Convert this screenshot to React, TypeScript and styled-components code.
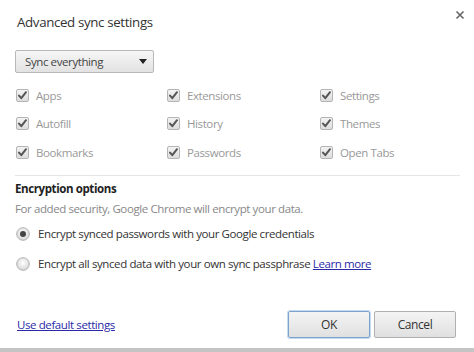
import styled, { createGlobalStyle } from 'styled-components';

const GlobalStyle = createGlobalStyle`
    html, body {
        margin: 0;
        padding: 0;
        background: #fff;
    }
    body {
        font-family: "Open Sans", "Noto Sans", sans-serif;
        color: #333;
        letter-spacing: -0.4px;
    }
`;

const syncItems = [
    ['Apps', 'Extensions', 'Settings'],
    ['Autofill', 'History', 'Themes'],
    ['Bookmarks', 'Passwords', 'Open Tabs'],
];

const CheckBox = () => (
    <svg width="13" height="13" viewBox="0 0 13 13">
        <defs>
            <linearGradient id="cbFill" x1="0" y1="0" x2="0" y2="1">
                <stop offset="0" stopColor="#f4f4f4" />
                <stop offset="1" stopColor="#dcdcdc" />
            </linearGradient>
        </defs>
        <rect x="0.5" y="0.5" width="12" height="12" rx="1.5" fill="url(#cbFill)" stroke="#b5b5b5" />
        <path d="M3 6.6 L5.3 9.2 L10 3.2" fill="none" stroke="#555" strokeWidth="2" strokeLinecap="round" strokeLinejoin="round" />
    </svg>
);

const Radio = ({ checked }: { checked?: boolean }) => (
    <svg width="14" height="14" viewBox="0 0 14 14">
        <defs>
            <radialGradient id="rdFill" cx="0.5" cy="0.4" r="0.6">
                <stop offset="0" stopColor="#ffffff" />
                <stop offset="1" stopColor="#d6d6d6" />
            </radialGradient>
        </defs>
        <circle cx="7" cy="7" r="6.3" fill="url(#rdFill)" stroke="#b0b0b0" />
        {checked && <circle cx="7" cy="7" r="3" fill="#444" />}
    </svg>
);

const App = () => {
    return (
        <>
            <GlobalStyle />
            <Dialog>
                <Header>
                    <Title>Advanced sync settings</Title>
                    <CloseButton>
                        <svg width="10" height="10" viewBox="0 0 10 10">
                            <path d="M1.5 1.5 L8.5 8.5 M8.5 1.5 L1.5 8.5" stroke="#666" strokeWidth="1.6" />
                        </svg>
                    </CloseButton>
                </Header>

                <Select>
                    <span>Sync everything</span>
                    <Arrow />
                </Select>

                <CheckGrid>
                    {syncItems.flat().map(label => (
                        <CheckItem key={label}>
                            <CheckBox />
                            <span>{label}</span>
                        </CheckItem>
                    ))}
                </CheckGrid>

                <Separator />

                <Section>
                    <SectionTitle>Encryption options</SectionTitle>
                    <Description>For added security, Google Chrome will encrypt your data.</Description>
                    <RadioRow>
                        <Radio checked />
                        <span>Encrypt synced passwords with your Google credentials</span>
                    </RadioRow>
                    <RadioRow>
                        <Radio />
                        <span>
                            Encrypt all synced data with your own sync passphrase <Link>Learn more</Link>
                        </span>
                    </RadioRow>
                </Section>

                <Footer>
                    <Link>Use default settings</Link>
                    <Buttons>
                        <Button $focused>OK</Button>
                        <Button>Cancel</Button>
                    </Buttons>
                </Footer>
            </Dialog>
            <BottomEdge />
        </>
    );
};

export default App;

const Dialog = styled.div`
    width: 474px;
    height: 348px;
    box-sizing: border-box;
    padding: 0 18px 0 15px;
    display: flex;
    flex-direction: column;
    font-size: 11.5px;
`;

const Header = styled.div`
    display: flex;
    justify-content: space-between;
    align-items: center;
    height: 43px;
    padding-left: 2px;
`;

const Title = styled.div`
    font-size: 13.3px;
    letter-spacing: -0.35px;
    color: #333;
`;

const CloseButton = styled.div`
    display: flex;
    align-items: center;
    margin-top: -14px;
    margin-right: -9px;
`;

const Select = styled.div`
    margin-top: 7px;
    width: 139px;
    height: 23px;
    box-sizing: border-box;
    border: 1px solid #b8b8b8;
    border-radius: 2px;
    background: linear-gradient(#f6f6f6, #e2e2e2);
    display: flex;
    align-items: center;
    justify-content: space-between;
    padding: 0 6px 0 9px;
    color: #444;
`;

const Arrow = styled.div`
    width: 0;
    height: 0;
    border-left: 4px solid transparent;
    border-right: 4px solid transparent;
    border-top: 5px solid #222;
`;

const CheckGrid = styled.div`
    margin-top: 8px;
    display: grid;
    grid-template-columns: 151px 153px 1fr;
    grid-auto-rows: 28.5px;
    padding-left: 1px;
`;

const CheckItem = styled.div`
    display: flex;
    align-items: center;
    gap: 7px;
    color: #999;
`;

const Separator = styled.div`
    margin-top: 8px;
    height: 1px;
    background: #e6e6e6;
    margin-right: -4px;
`;

const Section = styled.div`
    margin-top: 3px;
    display: flex;
    flex-direction: column;
`;

const SectionTitle = styled.div`
    font-weight: 700;
    color: #222;
    line-height: 20px;
`;

const Description = styled.div`
    color: #888;
    line-height: 20px;
`;

const RadioRow = styled.div`
    display: flex;
    align-items: center;
    gap: 8px;
    height: 30px;
    color: #333;
    padding-left: 1px;
`;

const Link = styled.a`
    color: #2a2aa8;
    text-decoration: underline;
    cursor: pointer;
`;

const Footer = styled.div`
    margin-top: auto;
    margin-bottom: 10px;
    display: flex;
    justify-content: space-between;
    align-items: center;
    padding-left: 2px;
`;

const Buttons = styled.div`
    display: flex;
    gap: 4px;
`;

const Button = styled.button<{ $focused?: boolean }>`
    width: 82px;
    height: 27px;
    border: 1px solid ${props => props.$focused ? '#7da2ce' : '#b0b0b0'};
    border-radius: 2px;
    background: linear-gradient(#f4f4f4, #e0e0e0);
    font-family: inherit;
    font-size: 12px;
    letter-spacing: inherit;
    color: #333;
    box-shadow: ${props => props.$focused ? '0 0 0 1px #c7d9ef' : 'none'};
`;

const BottomEdge = styled.div`
    height: 4px;
    background: #c4c4c4;
`;
